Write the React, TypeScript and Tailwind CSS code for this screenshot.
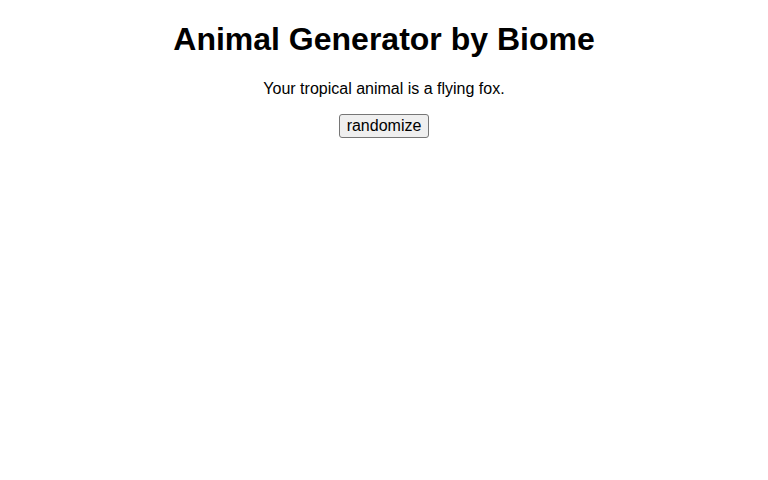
import { useState } from "react";

const animals = ["flying fox", "toucan", "jaguar", "sloth", "poison dart frog"];

export default function App() {
  const [animal, setAnimal] = useState(animals[0]);

  const randomize = () => {
    setAnimal(animals[Math.floor(Math.random() * animals.length)]);
  };

  return (
    <div className="min-h-screen bg-white text-black text-center font-['Liberation_Sans',Arial,sans-serif]">
      <h1 className="pt-[21.44px] mb-[21.44px] text-[32px] font-bold leading-[1.15]">
        Animal Generator by Biome
      </h1>
      <p className="text-base leading-[1.15] mb-4">Your tropical animal is a {animal}.</p>
      <button
        onClick={randomize}
        className="text-base leading-[1.15] px-[7px] py-[2px] bg-[#efefef] border border-[#767676] rounded-[3px] text-black"
      >
        randomize
      </button>
    </div>
  );
}
